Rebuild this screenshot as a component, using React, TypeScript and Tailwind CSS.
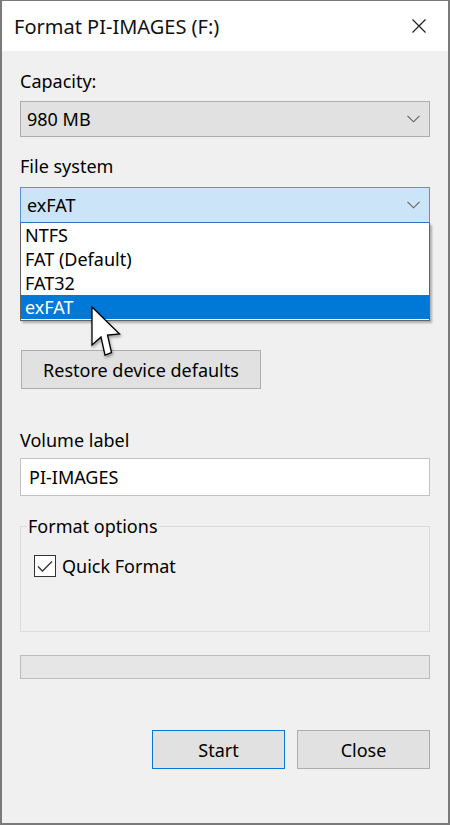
import React from "react";

const font = { fontFamily: '"Noto Sans", "Open Sans", sans-serif' };

function Chevron() {
  return (
    <svg width="13" height="8" viewBox="0 0 13 8" className="shrink-0">
      <path d="M0.5 0.8 L6.5 6.8 L12.5 0.8" fill="none" stroke="#606060" strokeWidth="1.1" />
    </svg>
  );
}

function Cursor() {
  return (
    <svg
      width="32"
      height="52"
      viewBox="0 0 32 52"
      className="absolute z-20 left-[71px] top-[119px] pointer-events-none drop-shadow-[1px_2px_1.5px_rgba(0,0,0,0.35)]"
    >
      <path
        d="M1 1 L1 39 L10 31 L14 49 L20.5 46.5 L16.5 29 L28.5 28 Z"
        fill="#ffffff"
        stroke="#000000"
        strokeWidth="1.3"
        strokeLinejoin="miter"
      />
    </svg>
  );
}

export default function App() {
  const options = ["NTFS", "FAT (Default)", "FAT32", "exFAT"];
  return (
    <div
      style={font}
      className="w-[450px] h-[825px] flex flex-col bg-[#f0f0f0] border-t border-l-2 border-r-2 border-b-2 border-[#7a7a7a] text-[18px] text-black"
    >
      {/* title bar */}
      <div className="h-[50px] bg-white flex items-center justify-between pl-[12px] pr-[22px] shrink-0">
        <span className="text-[20px] leading-none mt-[1px] text-[#111]">Format PI-IMAGES (F:)</span>
        <svg width="14" height="14" viewBox="0 0 14 14">
          <path d="M0.5 0.5 L13.5 13.5 M13.5 0.5 L0.5 13.5" stroke="#222" strokeWidth="1.2" />
        </svg>
      </div>

      <div className="flex flex-col px-[18px] flex-1">
        <div className="leading-[24px] mt-[18px]">Capacity:</div>
        <div className="mt-[8px] h-[36px] border border-[#adadad] bg-[#e1e1e1] flex items-center justify-between pl-[6px] pr-[9px]">
          <span className="leading-none">980 MB</span>
          <Chevron />
        </div>

        <div className="leading-[24px] mt-[17px]">File system</div>
        <div className="relative mt-[9px]">
          <div className="h-[36px] border border-[#5a93d4] border-b-[#3170c4] bg-[#cce4f7] flex items-center justify-between pl-[6px] pr-[9px]">
            <span className="leading-none">exFAT</span>
            <Chevron />
          </div>
          {/* open drop-down list */}
          <div className="absolute left-0 right-0 top-full z-10 bg-white border border-[#646464] border-t-0 shadow-[2px_2px_2px_rgba(0,0,0,0.28)] pb-px">
            {options.map((o) => (
              <div
                key={o}
                className={
                  o === "exFAT"
                    ? "h-[24px] leading-[24px] pl-[4px] bg-[#0078d7] text-white"
                    : "h-[24px] leading-[24px] pl-[4px]"
                }
              >
                {o}
              </div>
            ))}
          </div>
          <Cursor />
        </div>

        <button className="mt-[127px] ml-[1px] w-[240px] h-[39px] border border-[#adadad] bg-[#e1e1e1] text-[18px] leading-none text-black">
          Restore device defaults
        </button>

        <div className="leading-[24px] mt-[39px]">Volume label</div>
        <div className="mt-[6px] h-[38px] border border-[#c2c2c2] bg-white flex items-center pl-[8px]">
          <span className="leading-none">PI-IMAGES</span>
        </div>

        <fieldset className="mt-[18px] h-[118px] border border-[#dcdcdc] px-0">
          <legend className="leading-[24px] ml-[6px] px-px -mb-[2px]">Format options</legend>
          <label className="flex items-center gap-[6px] mt-[19px] ml-[13px]">
            <span className="w-[22px] h-[22px] border border-[#333] bg-white flex items-center justify-center">
              <svg width="16" height="13" viewBox="0 0 16 13">
                <path d="M1 6.5 L5.5 11 L15 1.5" fill="none" stroke="#333" strokeWidth="1.3" />
              </svg>
            </span>
            <span className="leading-none">Quick Format</span>
          </label>
        </fieldset>

        <div className="mt-[23px] h-[24px] border border-[#bcbcbc] bg-[#e6e6e6]" />

        <div className="mt-[51px] flex justify-end gap-[12px]">
          <button className="w-[133px] h-[39px] border border-[#0078d7] bg-[#e1e1e1] text-[18px] leading-none">
            Start
          </button>
          <button className="w-[133px] h-[39px] border border-[#adadad] bg-[#e1e1e1] text-[18px] leading-none">
            Close
          </button>
        </div>
      </div>
    </div>
  );
}
